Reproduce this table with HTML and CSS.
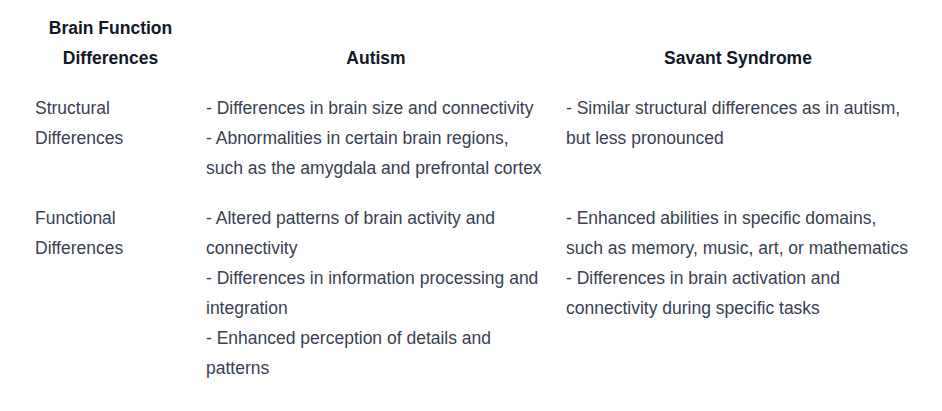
FILE: index.html
```html
<!DOCTYPE html>
<html lang="en">
<head>
<meta charset="utf-8">
<title>Brain Function Differences</title>
<link rel="stylesheet" href="styles.css">
</head>
<body>
<table class="compare">
  <colgroup>
    <col class="c1">
    <col class="c2">
    <col class="c3">
  </colgroup>
  <thead>
    <tr>
      <th>Brain Function Differences</th>
      <th>Autism</th>
      <th>Savant Syndrome</th>
    </tr>
  </thead>
  <tbody>
    <tr>
      <td>Structural Differences</td>
      <td>- Differences in brain size and connectivity<br>- Abnormalities in certain brain regions, such as the amygdala and prefrontal cortex</td>
      <td>- Similar structural differences as in autism, but less pronounced</td>
    </tr>
    <tr>
      <td>Functional Differences</td>
      <td>- Altered patterns of brain activity and connectivity<br>- Differences in information processing and integration<br>- Enhanced perception of details and patterns</td>
      <td>- Enhanced abilities in specific domains, such as memory, music, art, or mathematics<br>- Differences in brain activation and connectivity during specific tasks</td>
    </tr>
  </tbody>
</table>
</body>
</html>
```

FILE: styles.css
```css
html, body {
  margin: 0;
  padding: 0;
  background: #ffffff;
}

body {
  font-family: "Liberation Sans", Arial, sans-serif;
  font-size: 17.5px;
  line-height: 30px;
  color: #374151;
}

.compare {
  border-collapse: collapse;
  table-layout: fixed;
  width: 895px;
  margin: 3px 0 0 25px;
}

.c1 { width: 171px; }
.c2 { width: 360px; }
.c3 { width: 364px; }

.compare th {
  padding: 10px;
  font-weight: 700;
  color: #111827;
  text-align: center;
  vertical-align: bottom;
}

.compare td {
  padding: 10px;
  text-align: left;
  vertical-align: top;
}
```
